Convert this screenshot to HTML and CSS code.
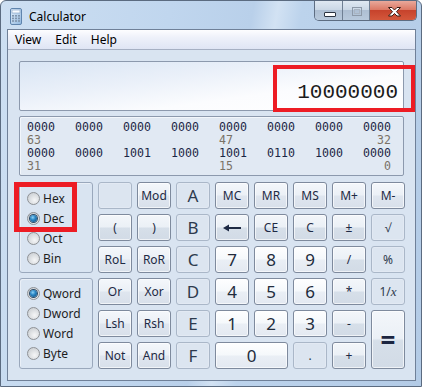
FILE: index.html
```html
<!DOCTYPE html>
<html lang="en">
<head>
<meta charset="utf-8">
<title>Calculator</title>
<link rel="stylesheet" href="styles.css">
</head>
<body>
<div class="window">
  <div class="titlebar">
    <svg class="appicon" width="12" height="17" viewBox="0 0 12 17">
      <defs>
        <linearGradient id="ig" x1="0" y1="0" x2="1" y2="1">
          <stop offset="0" stop-color="#e4f0fb"/>
          <stop offset="1" stop-color="#8fb6de"/>
        </linearGradient>
      </defs>
      <rect x="0.5" y="0.5" width="11" height="16" rx="1.5" fill="url(#ig)" stroke="#5f84ad"/>
      <rect x="2" y="2" width="8" height="3" fill="#f7fbff" stroke="#7d9cc0" stroke-width="0.6"/>
      <g fill="#7f93ab">
        <rect x="2" y="7" width="2" height="1.6"/><rect x="5" y="7" width="2" height="1.6"/><rect x="8" y="7" width="2" height="1.6"/>
        <rect x="2" y="9.6" width="2" height="1.6"/><rect x="5" y="9.6" width="2" height="1.6"/><rect x="8" y="9.6" width="2" height="1.6"/>
        <rect x="2" y="12.2" width="2" height="1.6"/><rect x="5" y="12.2" width="2" height="1.6"/><rect x="8" y="12.2" width="2" height="1.6"/>
      </g>
    </svg>
    <span class="title">Calculator</span>
    <div class="caption">
      <div class="cbtn cmin">
        <svg width="28" height="20" viewBox="0 0 28 20"><rect x="9.5" y="11.5" width="11" height="4" rx="0.5" fill="#fff" stroke="#2b3442"/></svg>
      </div>
      <div class="cbtn cmax">
        <svg width="27" height="20" viewBox="0 0 27 20"><rect x="9.5" y="6.5" width="9" height="8" fill="none" stroke="#8d99a8"/><rect x="11.5" y="8.5" width="5" height="4" fill="none" stroke="#a9b4c2"/></svg>
      </div>
      <div class="cbtn cclose">
        <svg width="47" height="20" viewBox="0 0 47 20"><path d="M18.5 6.5h3.5l2.5 2.5 2.5-2.5h3.5l-4 4.2 4 4.3h-3.5l-2.5-2.5-2.5 2.5h-3.5l4-4.3z" fill="#fff" stroke="#3a1c14" stroke-width="1" stroke-linejoin="round"/></svg>
      </div>
    </div>
  </div>
  <div class="client">
    <div class="menubar">
      <span class="menu">View</span>
      <span class="menu">Edit</span>
      <span class="menu">Help</span>
    </div>
    <div class="content">
      <div class="display"><span class="value">10000000</span></div>
      <div class="bits">
        <span class="b">0000</span><span class="b">0000</span><span class="b">0000</span><span class="b">0000</span><span class="b">0000</span><span class="b">0000</span><span class="b">0000</span><span class="b">0000</span>
        <span class="l c1">63</span><span class="l c5">47</span><span class="l c8">32</span>
        <span class="b">0000</span><span class="b">0000</span><span class="b">1001</span><span class="b">1000</span><span class="b">1001</span><span class="b">0110</span><span class="b">1000</span><span class="b">0000</span>
        <span class="l c1">31</span><span class="l c5">15</span><span class="l c8">0</span>
      </div>
      <div class="keypad">
        <div class="group g1">
          <label class="radio"><span class="dot"></span>Hex</label>
          <label class="radio"><span class="dot on"></span>Dec</label>
          <label class="radio"><span class="dot"></span>Oct</label>
          <label class="radio"><span class="dot"></span>Bin</label>
        </div>
        <div class="group g2">
          <label class="radio"><span class="dot on"></span>Qword</label>
          <label class="radio"><span class="dot"></span>Dword</label>
          <label class="radio"><span class="dot"></span>Word</label>
          <label class="radio"><span class="dot"></span>Byte</label>
        </div>

        <div class="k off"></div>
        <div class="k">Mod</div>
        <div class="k off big">A</div>
        <div class="k">MC</div>
        <div class="k">MR</div>
        <div class="k">MS</div>
        <div class="k">M+</div>
        <div class="k">M-</div>

        <div class="k op">(</div>
        <div class="k op">)</div>
        <div class="k off big">B</div>
        <div class="k op"><svg width="20" height="8" viewBox="0 0 20 8"><path d="M6 4h13" stroke="#1e2a44" stroke-width="2"/><path d="M1 4l6-3.5v7z" fill="#1e2a44"/></svg></div>
        <div class="k op">CE</div>
        <div class="k op">C</div>
        <div class="k op">±</div>
        <div class="k off">√</div>

        <div class="k">RoL</div>
        <div class="k">RoR</div>
        <div class="k off big">C</div>
        <div class="k num">7</div>
        <div class="k num">8</div>
        <div class="k num">9</div>
        <div class="k op">/</div>
        <div class="k off">%</div>

        <div class="k">Or</div>
        <div class="k">Xor</div>
        <div class="k off big">D</div>
        <div class="k num">4</div>
        <div class="k num">5</div>
        <div class="k num">6</div>
        <div class="k op">*</div>
        <div class="k off">1/<i class="ix">x</i></div>

        <div class="k">Lsh</div>
        <div class="k">Rsh</div>
        <div class="k off big">E</div>
        <div class="k num">1</div>
        <div class="k num">2</div>
        <div class="k num">3</div>
        <div class="k op">-</div>
        <div class="k op eq">=</div>

        <div class="k">Not</div>
        <div class="k">And</div>
        <div class="k off big">F</div>
        <div class="k num zero">0</div>
        <div class="k off">.</div>
        <div class="k op">+</div>
      </div>
    </div>
  </div>
  <div class="mark mark-display"></div>
  <div class="mark mark-radix"></div>
</div>
</body>
</html>
```
FILE: styles.css
```css
* { box-sizing: border-box; }
html, body { margin: 0; padding: 0; }
body {
  width: 422px;
  height: 387px;
  overflow: hidden;
  background: #ffffff;
  font-family: "Segoe UI", "Noto Sans", "Open Sans", sans-serif;
  font-size: 12px;
  color: #1e1e1e;
}
.window {
  position: relative;
  width: 422px;
  height: 387px;
  border: 1px solid #5b6b80;
  border-radius: 6px 6px 0 0;
  padding: 0 5px 5px 6px;
  background: linear-gradient(100deg, #cddff2 0%, #c0d6ee 35%, #b9d0ea 52%, #d2e2f3 57%, #bcd3ec 62%, #b3cbe6 100%);
  display: flex;
  flex-direction: column;
}
.titlebar {
  height: 28px;
  display: flex;
  align-items: flex-start;
  padding-left: 3px;
  flex: none;
}
.appicon { margin-top: 7px; flex: none; display: block; }
.title {
  margin-left: 7px;
  margin-top: 8px;
  line-height: 16px;
  font-size: 12px;
  color: #000;
}
.caption {
  margin-left: auto;
  display: flex;
  height: 20px;
  margin-right: -1px;
  border: 1px solid #5d6d82;
  border-top: none;
  border-radius: 0 0 5px 5px;
  overflow: hidden;
}
.cbtn { height: 19px; }
.cbtn svg { display: block; }
.cmin, .cmax {
  background: linear-gradient(#dfe8f2 0%, #cbd8e6 45%, #aebfd3 50%, #b8c9dc 100%);
  border-right: 1px solid #6f7f93;
}
.cmin { width: 28px; }
.cmax { width: 27px; }
.cclose {
  width: 46px;
  background: linear-gradient(#e9a99b 0%, #dc7a66 45%, #c7432c 50%, #d4583c 100%);
}
.client {
  flex: none;
  width: 409px;
  height: 352px;
  border: 1px solid #6f8098;
  background: #d9e4f1;
  display: flex;
  flex-direction: column;
}
.menubar {
  height: 20px;
  flex: none;
  display: flex;
  align-items: center;
  gap: 14px;
  padding-left: 7px;
  background: linear-gradient(#fdfdff 0%, #eef1fa 40%, #dfe5f4 100%);
  border-bottom: 1px solid #a6b0c3;
  font-size: 12px;
  color: #000;
}
.menu { line-height: 19px; }
.content {
  padding: 11px 10px 0 11px;
  display: flex;
  flex-direction: column;
}
.display {
  height: 50px;
  width: 385px;
  border: 1px solid #8c99ad;
  border-radius: 2px;
  background: linear-gradient(172deg, #d9e5f4 0%, #eaf0f9 35%, #fbfcfe 65%, #ffffff 100%);
  display: flex;
  align-items: flex-end;
  justify-content: flex-end;
  padding: 0 5px 7px 0;
}
.value {
  font-family: "Liberation Mono", "DejaVu Sans Mono", monospace;
  font-size: 21px;
  line-height: 21px;
  color: #1b1b1b;
}
.bits {
  margin-top: 5px;
  height: 60px;
  width: 385px;
  border: 1px solid #8c99ad;
  border-radius: 2px;
  background: #e1e9f3;
  box-shadow: inset 1px 1px 0 #f2f6fb;
  padding: 4px 0 0 7px;
  display: grid;
  grid-template-columns: repeat(7, 48px) 28px;
  grid-auto-rows: 13px;
  font-family: "DejaVu Sans Mono", "Liberation Mono", monospace;
  font-size: 11.6px;
  line-height: 13px;
}
.b { color: #1b2745; }
.l { color: #7a7266; }
.c1 { grid-column: 1; }
.c5 { grid-column: 5; }
.c8 { grid-column: 8; justify-self: end; }
.keypad {
  margin-top: 6px;
  display: grid;
  grid-template-columns: 74px repeat(8, 34px);
  grid-template-rows: repeat(6, 27px);
  column-gap: 5px;
  row-gap: 5px;
}
.group {
  grid-column: 1;
  border: 1px solid #9aa8bc;
  border-radius: 3px;
  box-shadow: inset 1px 1px 0 #e9eff7;
  padding: 5px 0 0 7px;
  display: flex;
  flex-direction: column;
}
.g1 { grid-row: 1 / 4; }
.g2 { grid-row: 4 / 7; padding-top: 4px; }
.radio {
  height: 20px;
  display: flex;
  align-items: center;
  gap: 3px;
  font-size: 12px;
  color: #1e1e1e;
}
.dot {
  width: 13px;
  height: 13px;
  border-radius: 50%;
  border: 1px solid #8f9296;
  background: radial-gradient(circle at 60% 65%, #f5f6f7 0%, #d9dcdf 55%, #c4c8cd 100%);
  position: relative;
  flex: none;
}
.dot.on::after {
  content: "";
  position: absolute;
  left: 2px;
  top: 2px;
  width: 7px;
  height: 7px;
  border-radius: 50%;
  background: radial-gradient(circle at 40% 35%, #8fd3f7 0%, #2a86c4 40%, #0d4677 100%);
  box-shadow: 0 0 0 1px #2c4b68;
}
.k {
  border: 1px solid #7e8a9d;
  border-radius: 3px;
  box-shadow: inset 0 0 0 1px rgba(255, 255, 255, 0.65);
  background: linear-gradient(#f4f7fb 0%, #ebf0f6 48%, #dfe6ef 52%, #d8e0ea 100%);
  display: flex;
  align-items: center;
  justify-content: center;
  font-size: 12px;
  color: #1e2a44;
}
.k svg { display: block; }
.k.op {
  background: linear-gradient(#f3f6fa 0%, #ebf0f6 48%, #d6dfe9 52%, #d2dbe6 100%);
  font-size: 12px;
}
.k.num {
  background: linear-gradient(#fefeff 0%, #f5f8fb 48%, #eaeff5 52%, #e3e9f1 100%);
  font-size: 17px;
  color: #222c3c;
}
.k.off {
  border-color: #aab7c8;
  background: #dce5f0;
  box-shadow: inset 0 0 0 1px #e2e9f3;
  color: #2e3a4c;
}
.k.big { font-size: 17px; color: #2d3a4d; }
.k.zero { grid-column: span 2; }
.k.eq {
  grid-row: span 2;
  font-size: 26px;
  font-weight: 700;
  color: #1b2540;
}
.ix { font-family: "Liberation Serif", "DejaVu Serif", serif; font-size: 13px; }
.mark {
  position: absolute;
  border-style: solid;
  border-color: #ed1c24;
  pointer-events: none;
}
.mark-display {
  left: 272px;
  top: 64px;
  width: 142px;
  height: 47px;
  border-width: 4px;
}
.mark-radix {
  left: 13px;
  top: 181px;
  width: 63px;
  height: 50px;
  border-width: 5px;
}
```
